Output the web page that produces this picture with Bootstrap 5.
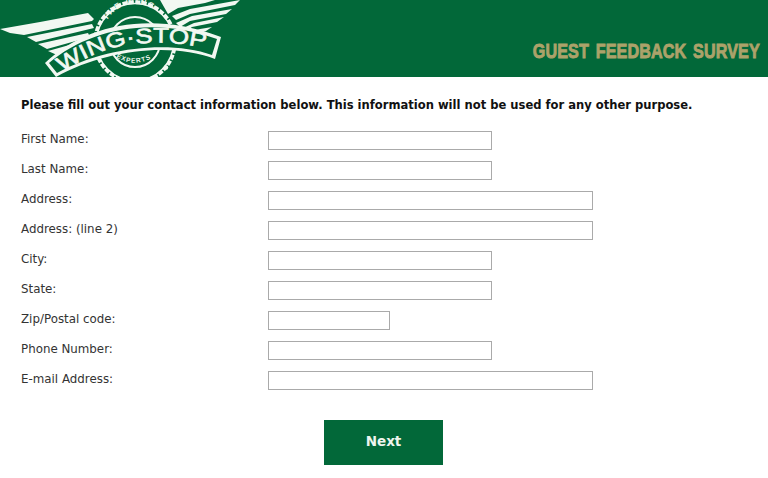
<!DOCTYPE html>
<html lang="en">
<head>
<meta charset="utf-8">
<title>Guest Feedback Survey</title>
<link href="https://cdn.jsdelivr.net/npm/bootstrap@5.3.0/dist/css/bootstrap.min.css" rel="stylesheet">
<style>
body{background:#fff;font-family:"DejaVu Sans",sans-serif;color:#222;overflow:hidden}
.top-band{height:77px;background:#026839;overflow:hidden}
.brand-art{width:250px;height:77px;display:block;flex:none}
.survey-title{font-family:"Liberation Sans",sans-serif;font-weight:700;font-size:21px;color:#aca26a;letter-spacing:.1px;word-spacing:3px;margin:40px 8px 0 0;line-height:1;white-space:nowrap;-webkit-text-stroke:.9px #aca26a;transform-origin:right center;transform:scaleX(.77)}
.survey-form{padding:21px 0 0 21px}
.intro-line{font-size:11.55px;font-weight:700;color:#111;margin:0 0 14px;line-height:15px;white-space:nowrap}
.field-row{height:30px;display:flex;align-items:flex-start}
.field-label{width:246.5px;font-size:11.85px;line-height:14px;padding-top:5px;margin:0;color:#333;flex:none}
.field-box{height:19px;margin-top:4px;border:1px solid #aaa;border-radius:0;background:#fff;padding:0 2px;display:block;outline:0}
.w-med{width:224px}.w-long{width:325px}.w-short{width:122.5px}
.next-btn{display:block;width:119px;height:45px;margin:23px 0 0 303px;background:#026839;border:0;border-radius:0;color:#eef5ee;font-weight:700;font-size:13.5px;padding:0 0 3px}
.next-btn:hover{background:#026839;color:#eef5ee}
</style>
</head>
<body>
<header class="top-band d-flex justify-content-between align-items-start">
<svg class="brand-art" viewBox="0 0 250 77" aria-hidden="true">
 <defs>
  <path id="archTop" d="M103 36A32 32 0 0 1 167 36"/>
  <path id="archBanner" d="M62 72C85 58 110 44 146 43C165 42 185 43 209 49"/>
  <path id="archLow" d="M111 54Q135 72 160 53"/>
 </defs>
 <g fill="#f2f8f2">
  <!-- left wing -->
  <path d="M0 29L40 22L88 13L94 19L92 21L24 35L10 33Z"/>
  <path d="M27 37L92 24L94 28L36 42Z"/>
  <path d="M38 44L88 33L90 37L47 49Z"/>
  <path d="M48 51L80 42L82 46L57 55Z"/>
  <path d="M58 57L74 51L76 54L66 60Z"/>
  <!-- right wing -->
  <path d="M160 0H215L205 3L178 8L168 14Z"/>
  <path d="M172 16L190 9L240 0L235 5L190 14L176 20Z"/>
  <path d="M176 23L192 16L232 9L226 14L190 21L180 27Z"/>
  <path d="M181 29L194 23L224 17L217 22L192 27L185 32Z"/>
  <path d="M186 33L200 29L212 27L206 31L192 35Z"/>
 </g>
 <!-- gear rings -->
 <g fill="none" stroke="#f2f8f2">
  <circle cx="135" cy="42" r="40" stroke-width="3.500" stroke-dasharray="5 1.500"/>
  <circle cx="135" cy="42" r="38.500" stroke-width="1.500"/>
  <circle cx="135" cy="42" r="25" stroke-width="2"/>
 </g>
 <!-- banner -->
 <path d="M45 63C85 25 150 10 221 37L215 59C170 42 105 50 56 77Z" fill="#f2f8f2"/>
 <path d="M49 63C88 30 150 15 217 39L212 55C170 40 104 47 57 73Z" fill="#026839"/>
 <g font-family="Liberation Sans, sans-serif" font-weight="700" fill="#f2f8f2">
  <text font-size="8" letter-spacing="1.800"><textPath href="#archTop" startOffset="16">THE WING</textPath></text>
  <text font-size="21" font-weight="400" stroke="#f2f8f2" stroke-width=".6"><textPath href="#archBanner" textLength="150" lengthAdjust="spacingAndGlyphs">WING·STOP</textPath></text>
  <text font-size="6.5" letter-spacing="1"><textPath href="#archLow" startOffset="6">EXPERTS</textPath></text>
 </g>
 <circle cx="166" cy="67.500" r="2.200" fill="#f2f8f2"/>
</svg>
<div class="survey-title">GUEST FEEDBACK SURVEY</div>
</header>
<main class="survey-form">
<p class="intro-line">Please fill out your contact information below. This information will not be used for any other purpose.</p>
<form>
<div class="field-row"><label class="field-label" for="f1">First Name:</label><input class="field-box w-med" id="f1" type="text"></div>
<div class="field-row"><label class="field-label" for="f2">Last Name:</label><input class="field-box w-med" id="f2" type="text"></div>
<div class="field-row"><label class="field-label" for="f3">Address:</label><input class="field-box w-long" id="f3" type="text"></div>
<div class="field-row"><label class="field-label" for="f4">Address: (line 2)</label><input class="field-box w-long" id="f4" type="text"></div>
<div class="field-row"><label class="field-label" for="f5">City:</label><input class="field-box w-med" id="f5" type="text"></div>
<div class="field-row"><label class="field-label" for="f6">State:</label><input class="field-box w-med" id="f6" type="text"></div>
<div class="field-row"><label class="field-label" for="f7">Zip/Postal code:</label><input class="field-box w-short" id="f7" type="text"></div>
<div class="field-row"><label class="field-label" for="f8">Phone Number:</label><input class="field-box w-med" id="f8" type="text"></div>
<div class="field-row"><label class="field-label" for="f9">E-mail Address:</label><input class="field-box w-long" id="f9" type="text"></div>
<button type="button" class="btn next-btn">Next</button>
</form>
</main>
<script src="https://cdn.jsdelivr.net/npm/bootstrap@5.3.0/dist/js/bootstrap.bundle.min.js"></script>
</body>
</html>
